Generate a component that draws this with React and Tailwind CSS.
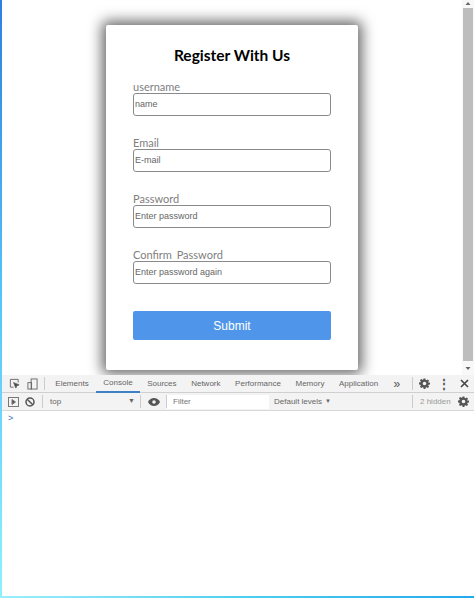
import React from "react";

const sans = "font-['Liberation_Sans',Arial,sans-serif]";

function Field({ label, placeholder, mb }) {
  return (
    <div className={mb}>
      <div className="h-[14px] text-[11px] leading-[16px] [word-spacing:2px] text-[#808080] font-['Lato',sans-serif]">{label}</div>
      <div className={`h-[23px] rounded-[3px] border border-[#8a8a8a] bg-white pl-[1px] pt-[1px] flex items-center text-[9px] text-[#666] ${sans}`}>{placeholder}</div>
    </div>
  );
}

function Tab({ children, active }) {
  return (
    <div className={`h-[18px] pt-[1px] flex items-center justify-center text-[8px] text-[#666] ${sans} ${active ? "border-b-2 border-[#3f7fc4]" : ""} px-[7.300px]`}>
      {children}
    </div>
  );
}

function Gear() {
  return (
    <svg width="11" height="11" viewBox="0 0 24 24" fill="#555">
      <path fillRule="evenodd" d="M10 1h4l.6 3.200 1.900.8 2.700-1.900 2.800 2.800-1.900 2.700.8 1.900L24 10v4l-3.100.6-.8 1.900 1.900 2.700-2.800 2.800-2.700-1.900-1.900.8L14 24h-4l-.6-3.100-1.900-.8-2.700 1.900L2 19.200l1.900-2.700-.8-1.900L0 14v-4l3.100-.5.8-1.900L2 4.900 4.800 2.100l2.700 1.900 1.900-.8zM12 8a4 4 0 1 0 0 8 4 4 0 0 0 0-8z" />
    </svg>
  );
}

export default function App() {
  return (
    <div className="relative w-[474px] h-[598px] bg-white overflow-hidden flex flex-col pl-[2px] pb-[2px]">
      <div className="absolute left-0 top-0 bottom-0 w-[2px] bg-gradient-to-b from-[#2f7fdc] via-[#55c4fb] to-[#8ef2fb]" />
      <div className="absolute left-0 right-0 bottom-0 h-[2px] bg-gradient-to-r from-[#9aeefb] via-[#4fd0ef] to-[#22a8ee]" />
      <div className="h-[375px] flex shrink-0">
        <div className="flex-1 pt-[25px] pl-[104px]">
          <div className="w-[252px] h-[345px] bg-white rounded-[2px] shadow-[0_0_14px_4px_rgba(0,0,0,0.6)] pt-[19px] px-[27px]">
            <h1 className="text-center text-[15.500px] leading-[22px] font-bold text-black mb-[13px] font-['Lato',sans-serif]">Register With Us</h1>
            <Field label="username" placeholder="name" mb="mb-[19px]" />
            <Field label="Email" placeholder="E-mail" mb="mb-[19px]" />
            <Field label="Password" placeholder="Enter password" mb="mb-[19px]" />
            <Field label="Confirm Password" placeholder="Enter password again" mb="mb-[27px]" />
            <div className={`h-[29px] rounded-[2px] bg-[#4f96ea] text-white text-[12px] flex items-center justify-center ${sans}`}>Submit</div>
          </div>
        </div>
        <div className="w-[12px] bg-[#f8f8f8] flex flex-col items-center">
          <svg className="h-[8px] w-[6px]" viewBox="0 0 6 8" fill="#666"><path d="M3 2l2.500 3h-5z" /></svg>
          <div className="w-[10px] h-[353px] bg-[#bdbdbd]" />
          <div className="flex-1 flex items-center">
            <svg className="h-[6px] w-[6px]" viewBox="0 0 6 6" fill="#666"><path d="M3 5L.5 2h5z" /></svg>
          </div>
        </div>
      </div>

      <div className="h-[18px] flex items-center bg-[#f3f3f3] border-b border-[#d0d0d0] shrink-0">
        <div className="flex items-center gap-[7px] pl-[7px] pr-[6px] border-r border-[#ccc] h-[13px]">
          <svg width="11" height="11" viewBox="0 0 12 12" fill="none" stroke="#666" strokeWidth="1"><path d="M10 5V1.500H1.500V10H5" /><path d="M5 5l6 2.500-2.500 1L7.500 11z" fill="#444" /></svg>
          <svg width="11" height="12" viewBox="0 0 12 13" fill="none" stroke="#666" strokeWidth="1"><rect x="4.500" y="1" width="6.500" height="11" /><rect x="1" y="5" width="4" height="7" /></svg>
        </div>
        <div className="flex items-center pl-[3px]">
          <Tab>Elements</Tab>
          <Tab active>Console</Tab>
          <Tab>Sources</Tab>
          <Tab>Network</Tab>
          <Tab>Performance</Tab>
          <Tab>Memory</Tab>
          <Tab>Application</Tab>
        </div>
        <span className={`text-[12px] leading-none text-[#555] ml-[8px] ${sans}`}>»</span>
        <div className="ml-[12px] h-[13px] border-l border-[#ccc] pl-[6px] flex items-center gap-[8px]">
          <Gear />
          <span className={`text-[12px] font-bold leading-none text-[#555] ${sans}`}>⋮</span>
          <svg className="ml-[2px]" width="9" height="9" viewBox="0 0 9 9" stroke="#444" strokeWidth="1.600"><path d="M1 1l7 7M8 1L1 8" /></svg>
        </div>
      </div>

      <div className={`h-[18px] flex items-center bg-[#f3f3f3] border-b border-[#d8d8d8] text-[8px] text-[#666] shrink-0 ${sans}`}>
        <div className="flex items-center gap-[6px] pl-[6px] w-[41px] h-[13px] border-r border-[#ccc]">
          <svg width="11" height="10" viewBox="0 0 11 10" fill="none" stroke="#777"><rect x=".5" y=".5" width="10" height="9" /><path d="M4 2.500L7.500 5 4 7.500z" fill="#555" /></svg>
          <svg width="10" height="10" viewBox="0 0 10 10" fill="none" stroke="#555" strokeWidth="1.500"><circle cx="5" cy="5" r="4" /><path d="M2.200 2.200l5.600 5.600" /></svg>
        </div>
        <div className="w-[97px] pl-[7px] flex items-center justify-between pr-[5px]">
          <span>top</span>
          <span className="text-[7px]">▼</span>
        </div>
        <div className="w-[27px] h-[13px] border-x border-[#ccc] flex items-center justify-center">
          <svg width="12" height="8" viewBox="0 0 12 8"><path d="M6 0C3.500 0 1.300 1.600 0 4c1.300 2.400 3.500 4 6 4s4.700-1.600 6-4c-1.300-2.400-3.500-4-6-4z" fill="#555" /><circle cx="6" cy="4" r="1.800" fill="#f3f3f3" /></svg>
        </div>
        <div className="w-[102px] h-[14px] bg-white pl-[6px] flex items-center text-[#777]">Filter</div>
        <div className="w-[143px] pl-[5px] flex items-center gap-[3px]">
          <span>Default levels</span>
          <span className="text-[6px]">▼</span>
        </div>
        <div className="h-[13px] border-l border-[#ccc] pl-[7px] flex items-center gap-[7px] text-[#999]">
          <span>2 hidden</span>
          <Gear />
        </div>
      </div>

      <div className="flex-1 bg-white pl-[6px] pt-[2px]">
        <div className={`text-[9px] leading-[10px] text-[#3f6fb0] ${sans}`}>&gt;</div>
      </div>
    </div>
  );
}
